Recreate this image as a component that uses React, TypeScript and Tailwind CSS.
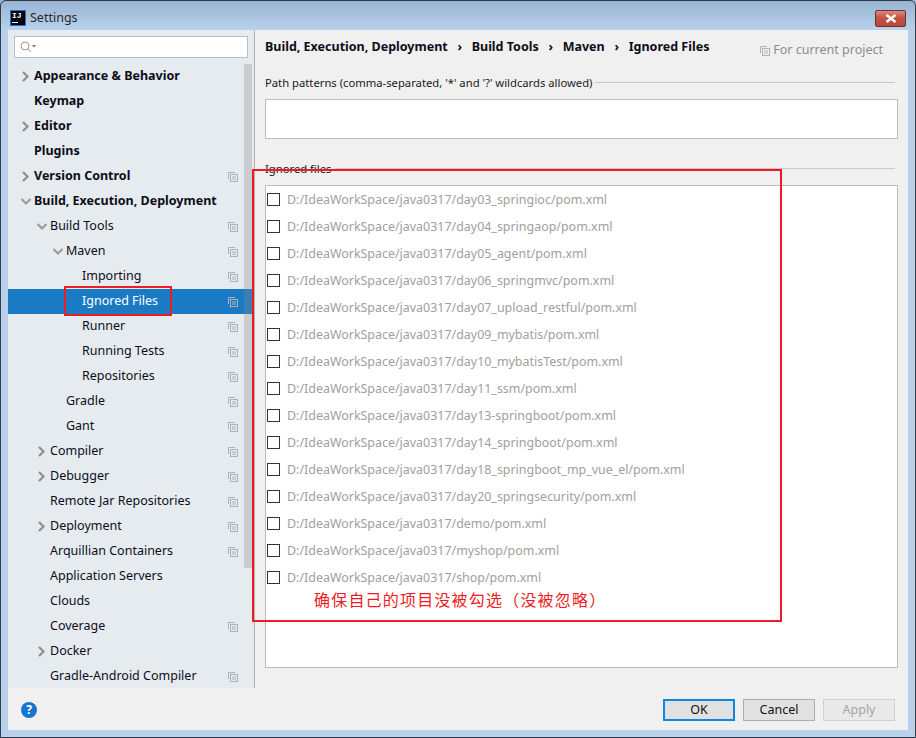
type Row = {
  label: string;
  indent: number;
  arrow?: 'right' | 'down';
  bold?: boolean;
  copy?: boolean;
  selected?: boolean;
};

const rows: Row[] = [
  { label: 'Appearance & Behavior', indent: 0, arrow: 'right', bold: true },
  { label: 'Keymap', indent: 0, bold: true },
  { label: 'Editor', indent: 0, arrow: 'right', bold: true },
  { label: 'Plugins', indent: 0, bold: true },
  { label: 'Version Control', indent: 0, arrow: 'right', bold: true, copy: true },
  { label: 'Build, Execution, Deployment', indent: 0, arrow: 'down', bold: true },
  { label: 'Build Tools', indent: 1, arrow: 'down', copy: true },
  { label: 'Maven', indent: 2, arrow: 'down', copy: true },
  { label: 'Importing', indent: 3, copy: true },
  { label: 'Ignored Files', indent: 3, copy: true, selected: true },
  { label: 'Runner', indent: 3, copy: true },
  { label: 'Running Tests', indent: 3, copy: true },
  { label: 'Repositories', indent: 3, copy: true },
  { label: 'Gradle', indent: 2, copy: true },
  { label: 'Gant', indent: 2, copy: true },
  { label: 'Compiler', indent: 1, arrow: 'right', copy: true },
  { label: 'Debugger', indent: 1, arrow: 'right', copy: true },
  { label: 'Remote Jar Repositories', indent: 1, copy: true },
  { label: 'Deployment', indent: 1, arrow: 'right', copy: true },
  { label: 'Arquillian Containers', indent: 1, copy: true },
  { label: 'Application Servers', indent: 1 },
  { label: 'Clouds', indent: 1 },
  { label: 'Coverage', indent: 1, copy: true },
  { label: 'Docker', indent: 1, arrow: 'right' },
  { label: 'Gradle-Android Compiler', indent: 1, copy: true },
];

const files = [
  'day03_springioc',
  'day04_springaop',
  'day05_agent',
  'day06_springmvc',
  'day07_upload_restful',
  'day09_mybatis',
  'day10_mybatisTest',
  'day11_ssm',
  'day13-springboot',
  'day14_springboot',
  'day18_springboot_mp_vue_el',
  'day20_springsecurity',
  'demo',
  'myshop',
  'shop',
];

function CopyIcon() {
  return (
    <svg width="10" height="10" viewBox="0 0 10 10" fill="none" stroke="#a9b4b8" strokeWidth="1" className="shrink-0">
      <path d="M0.5 7V0.5H7" />
      <rect x="2.5" y="2.5" width="7" height="7" />
      <path d="M4 5H8M4 7H8" />
    </svg>
  );
}

function Arrow({ dir }: { dir: 'right' | 'down' }) {
  if (dir === 'right') {
    return (
      <svg width="10" height="11" viewBox="0 0 10 11" fill="none" stroke="#8f8f8f" strokeWidth="2.2">
        <path d="M2 1L6.5 5.5L2 10" />
      </svg>
    );
  }
  return (
    <svg width="10" height="11" viewBox="0 0 10 11" fill="none" stroke="#9a9a9a" strokeWidth="2.2">
      <path d="M0.5 3L5 7.5L9.5 3" />
    </svg>
  );
}

function TreeRow({ row }: { row: Row }) {
  return (
    <div className={`h-[25px] flex items-center relative ${row.selected ? 'bg-[#1a7ac4] text-white' : 'text-[#0d0d1a]'}`}>
      <div className="w-4 shrink-0 pl-[3px] flex" style={{ marginLeft: 10 + row.indent * 16 }}>
        {row.arrow && <Arrow dir={row.arrow} />}
      </div>
      <span className={`whitespace-nowrap ${row.bold ? 'font-bold' : ''}`}>{row.label}</span>
      {row.copy && (
        <span className="absolute left-[220px] top-[8px]">
          <CopyIcon />
        </span>
      )}
    </div>
  );
}

function SectionTitle({ label }: { label: string }) {
  return (
    <div className="flex items-center gap-[3px] h-[18px] pr-[3px] pb-[2px]">
      <span className="whitespace-nowrap text-[#1a1a1a] text-[11.25px] pt-[2px]">{label}</span>
      <div className="flex-1 h-px bg-[#c8c8c8]" />
    </div>
  );
}

function Crumb({ label }: { label: string }) {
  return <span className="font-bold text-[#0d0d1a]">{label}</span>;
}

function Sep() {
  return <span className="font-bold w-[24px] text-center text-[#0d0d1a]">›</span>;
}

export default function App() {
  return (
    <div className="w-[916px] h-[738px] relative overflow-hidden flex flex-col bg-[#b9d1ea] text-[12.5px] font-['Noto_Sans','Noto_Sans_CJK_SC',sans-serif] leading-none">
      {/* title bar */}
      <div className="h-[30px] shrink-0 flex items-center pl-[10px] pt-[5px] relative bg-gradient-to-b from-[#98b4d2] to-[#b9d1ea]">
        <div className="w-[16px] h-[16px] bg-black border border-[#1c74d8] text-white text-[8px] font-bold leading-[8px] pl-[1px] pt-[1px] font-['Liberation_Mono',monospace]">
          IJ
          <div className="w-[6px] h-px bg-white mt-[2px]" />
        </div>
        <span className="ml-[4px] pt-[2px] text-[#2a2a2a]">Settings</span>
        <div className="absolute right-[10px] top-[10px] w-[31px] h-[17px] rounded-[2px] border border-[#6b2f38] bg-gradient-to-b from-[#d9887e] via-[#c2513f] to-[#b84a3c] flex items-center justify-center">
          <svg width="12" height="9" viewBox="0 0 12 9">
            <path d="M1.5 1L10.5 8M10.5 1L1.5 8" stroke="#fff" strokeWidth="2.4" />
          </svg>
        </div>
      </div>

      {/* window body */}
      <div className="flex-1 mx-[8px] mb-[8px] bg-[#f0f0f0] flex flex-col min-h-0">
        <div className="flex-1 flex min-h-0">
          {/* sidebar */}
          <div className="w-[247px] shrink-0 bg-[#e6ebf0] border-r border-[#b4b4b4] flex flex-col relative overflow-hidden">
            <div className="h-[34px] shrink-0 pt-[6px] px-[6px]">
              <div className="h-[22px] bg-white border border-[#bdbdbd] flex items-center pl-[5px]">
                <svg width="16" height="12" viewBox="0 0 16 12" fill="none">
                  <circle cx="5" cy="5" r="4" stroke="#9a9a9a" />
                  <path d="M8 8L11 11" stroke="#9a9a9a" />
                  <path d="M12 4H16L14 6.5Z" fill="#777" />
                </svg>
              </div>
            </div>
            <div className="flex-1 min-h-0">
              {rows.map((r) => (
                <TreeRow key={r.label} row={r} />
              ))}
            </div>
            <div className="absolute left-[236px] top-[34px] w-[8px] h-[504px] bg-[#888888]/30" />
          </div>

          {/* content */}
          <div className="flex-1 min-w-0 flex flex-col pl-[10px] pr-[10px] pb-[20px]">
            <div className="h-[33px] shrink-0 flex items-center pt-[2px]">
              <Crumb label="Build, Execution, Deployment" />
              <Sep />
              <Crumb label="Build Tools" />
              <Sep />
              <Crumb label="Maven" />
              <Sep />
              <Crumb label="Ignored Files" />
              <span className="ml-auto mr-[15px] flex items-center gap-[3px] text-[#8c8c8c] mt-[6px]">
                <CopyIcon />
                For current project
              </span>
            </div>
            <div className="mt-[11px]">
              <SectionTitle label="Path patterns (comma-separated, '*' and '?' wildcards allowed)" />
            </div>
            <div className="h-[40px] mt-[7px] bg-white border border-[#bdbdbd] shrink-0" />
            <div className="mt-[21px]">
              <SectionTitle label="Ignored files" />
            </div>
            <div className="flex-1 mt-[7px] bg-white border border-[#bdbdbd] min-h-0">
              {files.map((f) => (
                <div key={f} className="h-[27px] flex items-center pl-[1px]">
                  <div className="w-[13px] h-[13px] border border-[#333] bg-white shrink-0" />
                  <span className="ml-[7px] pt-[2px] text-[#a0a0a0] text-[12.45px] whitespace-nowrap">D:/IdeaWorkSpace/java0317/{f}/pom.xml</span>
                </div>
              ))}
            </div>
          </div>
        </div>

        {/* footer */}
        <div className="h-[42px] shrink-0 flex items-center pl-[13px] pr-[13px] pt-[2px]">
          <div className="w-[16px] h-[16px] rounded-full bg-[#1675d1] text-white text-[12px] font-bold flex items-center justify-center">?</div>
          <button className="ml-auto w-[72px] h-[22px] bg-[#e1e1e1] border-2 border-[#0f86e0] text-[#111]">OK</button>
          <button className="ml-[8px] w-[72px] h-[22px] bg-[#e1e1e1] border border-[#adadad] text-[#111]">Cancel</button>
          <button className="ml-[8px] w-[72px] h-[22px] bg-[#e9e9e9] border border-[#d0d0d0] text-[#a6a6a6]">Apply</button>
        </div>
      </div>

      {/* outer window edge */}
      <div className="absolute inset-0 border border-[#2f3b46] rounded-t-[6px] pointer-events-none" />

      {/* red annotations drawn over the screenshot */}
      <div className="absolute left-[252px] top-[169px] w-[530px] h-[453px] border-2 border-[#ed1c24]" />
      <div className="absolute left-[64px] top-[286px] w-[108px] h-[30px] border-2 border-[#ed1c24]" />
      <div className="absolute left-[314px] top-[592px] text-[16px] text-[#ed1c24] whitespace-nowrap tracking-[1.2px]">确保自己的项目没被勾选（没被忽略）</div>
    </div>
  );
}
